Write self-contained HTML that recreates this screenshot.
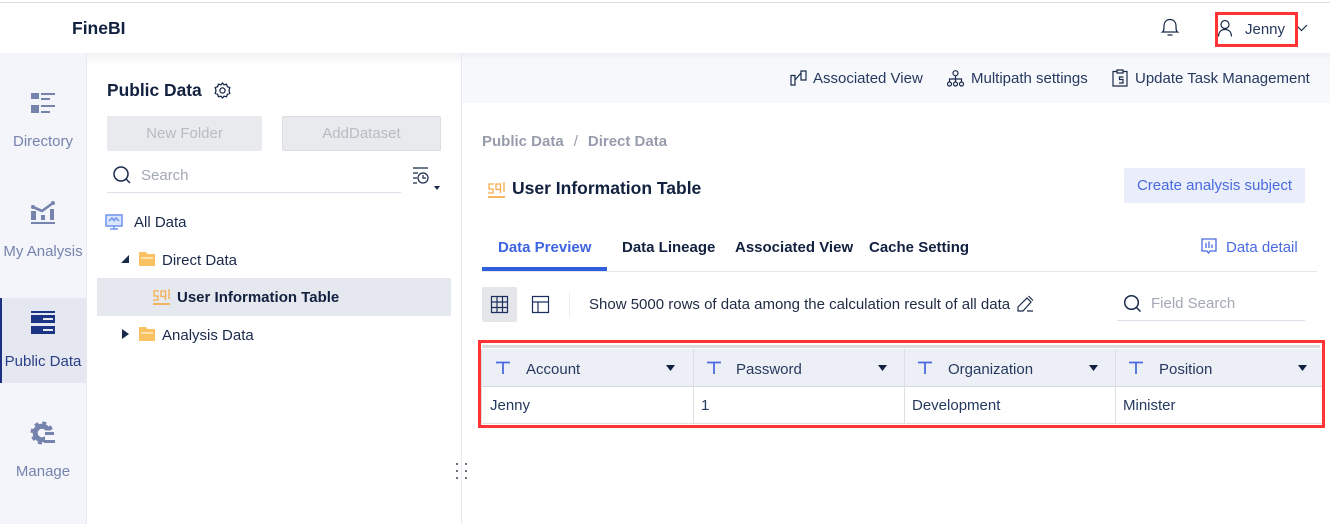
<!DOCTYPE html>
<html>
<head>
<meta charset="utf-8">
<style>
html,body{margin:0;padding:0;background:#fff}
#p{position:relative;width:1330px;height:524px;overflow:hidden;background:#fff;font-family:"Liberation Sans",sans-serif;color:#1a2a4a;font-size:15px}
#p div,#p svg{position:absolute}
.t{white-space:nowrap;line-height:18px}
.n{color:#7583ad;width:86px;text-align:center;left:0;font-size:15px}
.b{font-weight:bold;color:#12213f}
svg{fill:none;stroke:#1a2a4a;stroke-width:1.2;overflow:visible}
</style>
</head>
<body>
<div id="p">
<div style="left:0;top:2px;width:1330px;height:1px;background:#dcdde0"></div>
<div style="left:0;top:53px;width:1330px;height:50px;background:linear-gradient(#eceef3 0,#f6f8fc 6px)"></div>
<div style="left:87px;top:53px;width:375px;height:471px;background:linear-gradient(#f0f1f4 0,#fff 12px)"></div>
<div style="left:0;top:53px;width:86px;height:471px;background:#f4f5fa;border-right:1px solid #e8eaf0"></div>
<div style="left:461px;top:53px;width:1px;height:471px;background:#e8e9ee"></div>

<div class="t b" style="left:72px;top:19px;font-size:17.500px">FineBI</div>

<svg style="left:1161px;top:18px" width="18" height="18" viewBox="0 0 18 18"><path d="M1.500 14C3 13 3 11 3 8C3 4 5.500 1.500 9 1.500C12.500 1.500 15 4 15 8C15 11 15 13 16.500 14ZM6.500 17H11.500"/></svg>
<svg style="left:1218px;top:20px" width="14" height="17" viewBox="0 0 14 17"><circle cx="7" cy="4.500" r="4"/><path d="M.6 16.500C.6 12 3 9.500 7 9.500C11 9.500 13.400 12 13.400 16.500"/></svg>
<div class="t" style="left:1245px;top:21px;color:#26395f">Jenny</div>
<svg style="left:1295px;top:24px" width="13" height="8" viewBox="0 0 13 8"><path d="M1 1L6.500 6.500L12 1"/></svg>
<div style="left:1215px;top:12px;width:77px;height:29px;border:3px solid #f33;"></div>

<svg style="left:790px;top:70px" width="17" height="16" viewBox="0 0 17 16"><path d="M1 5.500H5V15H1ZM11 1H16V10H11ZM5 10L11 3"/></svg>
<div class="t" style="left:813px;top:70px;color:#26395f">Associated View</div>
<svg style="left:947px;top:70px" width="17" height="17" viewBox="0 0 17 17"><circle cx="8.500" cy="3.200" r="2.500"/><circle cx="2.500" cy="14" r="2"/><circle cx="8.500" cy="14" r="2"/><circle cx="14.500" cy="14" r="2"/><path d="M8.500 6V12M2.500 12V9H14.500V12"/></svg>
<div class="t" style="left:971px;top:70px;color:#26395f">Multipath settings</div>
<svg style="left:1112px;top:69px" width="17" height="18" viewBox="0 0 17 18"><path d="M5 2.500H1V17H15V2.500H11M5 1H11V4H5ZM11.500 8H7.500V10.500H11V14H7"/></svg>
<div class="t" style="left:1135px;top:70px;color:#26395f">Update Task Management</div>

<!-- nav -->
<svg style="left:31px;top:92px;stroke:none;fill:#7583ad" width="24" height="22" viewBox="0 0 24 22"><path d="M0 1H8V7H0ZM0 13H8V21H0ZM10 1H24V3H10ZM10 6H19V8H10ZM10 13H24V15H10ZM10 19H19V21H10Z"/></svg>
<div class="t n" style="top:133px">Directory</div>
<svg style="left:31px;top:201px;stroke:none;fill:#7583ad" width="24" height="24" viewBox="0 0 24 24"><path d="M0 10H5V19H0ZM10 14H14V19H10ZM19 8H23V19H19ZM0 21H24V23H0Z"/><path d="M2 6L11 10L22 2" style="stroke:#7583ad;stroke-width:2.600;fill:none"/><circle cx="2" cy="6" r="2"/><circle cx="22" cy="2" r="2"/></svg>
<div class="t n" style="top:243px">My Analysis</div>
<div style="left:0;top:298px;width:86px;height:85px;background:#e6e8f1"></div>
<div style="left:0;top:298px;width:2px;height:85px;background:#1c3280"></div>
<svg style="left:31px;top:311px;stroke:none;fill:#1c3484" width="24" height="24" viewBox="0 0 24 24"><path d="M0 0H24V2H0ZM0 4H24V12H0ZM0 15H24V23H0Z"/><path d="M12 7H22V9H12ZM12 18H22V20H12Z" fill="#e6e8f1"/></svg>
<div class="t n" style="top:353px;color:#2a3f85">Public Data</div>
<svg style="left:31px;top:421px;stroke:none;fill:#7583ad" width="24" height="24" viewBox="0 0 24 24"><circle cx="11" cy="12" r="6.800" style="stroke:#7583ad;stroke-width:5;fill:none"/><circle cx="11" cy="12" r="10" style="stroke:#7583ad;stroke-width:3;stroke-dasharray:4 3.850;fill:none"/><path d="M14 9.500H24V24H14Z" fill="#f4f5fa"/><path d="M14 11H23V14H14ZM13 19H24V22H13Z"/></svg>
<div class="t n" style="top:463px">Manage</div>

<!-- panel -->
<div class="t b" style="left:107px;top:81px;font-size:17.400px">Public Data</div>
<svg style="left:214px;top:82px;stroke-width:1.300" width="17" height="17" viewBox="0 0 17 17"><path d="M8.500 1L10 2.800L12.500 2.300L13.400 4.700L15.800 5.500L15 8.500L15.800 11.500L13.400 12.300L12.500 14.700L10 14.200L8.500 16L7 14.200L4.500 14.700L3.600 12.300L1.200 11.500L2 8.500L1.200 5.500L3.600 4.700L4.500 2.300L7 2.800Z"/><circle cx="8.500" cy="8.500" r="2.600"/></svg>
<div style="left:107px;top:116px;width:155px;height:35px;background:#e9eaed;border-radius:2px"></div>
<div class="t" style="left:107px;top:125px;width:155px;text-align:center;color:#b8bbc2">New Folder</div>
<div style="left:282px;top:116px;width:157px;height:33px;background:#e9eaed;border:1px solid #dcdee2;border-radius:2px"></div>
<div class="t" style="left:282px;top:125px;width:159px;text-align:center;color:#b8bbc2">AddDataset</div>
<svg style="left:113px;top:166px;stroke-width:1.500" width="18" height="18" viewBox="0 0 18 18"><circle cx="8" cy="8" r="7"/><path d="M13 13L17 17"/></svg>
<div class="t" style="left:141px;top:167px;color:#a3a8b5">Search</div>
<div style="left:107px;top:192px;width:294px;height:1px;background:#dfe1ea"></div>
<svg style="left:412px;top:167px" width="20" height="18" viewBox="0 0 20 18"><path d="M1 1H16M1 6H6M1 11H5M1 16H5"/><circle cx="11" cy="11" r="5"/><path d="M11 8V11H14"/></svg>
<svg style="left:434px;top:186px;stroke:none;fill:#1a2a4a" width="6" height="5" viewBox="0 0 6 5"><path d="M0 0H6L3 4Z"/></svg>

<svg style="left:105px;top:214px;stroke:#6f94ee;stroke-width:1.500" width="18" height="16" viewBox="0 0 18 16"><path d="M1 1H17V12H1Z" fill="#dbe5fb"/><path d="M4 7L7 4L9 6.500L11 4L14 7M5 15H13M9 12V15"/></svg>
<div class="t" style="left:134px;top:214px">All Data</div>
<svg style="left:121px;top:255px;stroke:none;fill:#1a2a4a" width="9" height="8" viewBox="0 0 9 8"><path d="M8 0V8H0Z"/></svg>
<svg style="left:139px;top:251px;stroke:none" width="16" height="16" viewBox="0 0 16 16"><path d="M0 1H7L8.500 3H16V15H0Z" fill="#fbc262"/><path d="M2 6H14V8H2Z" fill="#fde2ad"/></svg>
<div class="t" style="left:162px;top:252px">Direct Data</div>
<div style="left:97px;top:278px;width:354px;height:38px;background:#e6e8ef"></div>
<svg style="left:153px;top:289px;stroke:#f5ad4a;stroke-width:1.300" width="17" height="17" viewBox="0 0 17 17"><path d="M6 2H1V7H5V11H0M8 2H12.500V7.500H8V2ZM12.500 7.500V11M16 0V10"/><path d="M0 15H17" style="stroke-width:1.800"/></svg>
<div class="t" style="left:177px;top:289px;font-weight:bold;color:#12213f">User Information Table</div>
<svg style="left:122px;top:329px;stroke:none;fill:#1a2a4a" width="7" height="10" viewBox="0 0 7 10"><path d="M0 0L7 5L0 10Z"/></svg>
<svg style="left:139px;top:326px;stroke:none" width="16" height="16" viewBox="0 0 16 16"><path d="M0 1H7L8.500 3H16V15H0Z" fill="#fbc262"/><path d="M2 6H14V8H2Z" fill="#fde2ad"/></svg>
<div class="t" style="left:162px;top:327px">Analysis Data</div>
<svg style="left:456px;top:463px;stroke:none;fill:#6a6f80" width="11" height="18" viewBox="0 0 11 18"><rect x="0" y="0" width="2" height="2"/><rect x="9" y="0" width="2" height="2"/><rect x="0" y="7" width="2" height="2"/><rect x="9" y="7" width="2" height="2"/><rect x="0" y="14" width="2" height="2"/><rect x="9" y="14" width="2" height="2"/></svg>

<!-- main -->
<div class="t" style="left:482px;top:133px;font-weight:bold;color:#969cab">Public Data<span style="margin:0 10px;font-weight:normal">/</span>Direct Data</div>
<svg style="left:488px;top:182px;stroke:#f5ad4a;stroke-width:1.300" width="17" height="17" viewBox="0 0 17 17"><path d="M6 2H1V7H5V11H0M8 2H12.500V7.500H8V2ZM12.500 7.500V11M16 0V10"/><path d="M0 15H17" style="stroke-width:1.800"/></svg>
<div class="t b" style="left:512px;top:179px;font-size:17.500px">User Information Table</div>
<div style="left:1124px;top:168px;width:181px;height:35px;background:#e9eefa;border-radius:2px"></div>
<div class="t" style="left:1124px;top:177px;width:181px;text-align:center;color:#4a6ae0">Create analysis subject</div>

<div class="t" style="left:498px;top:239px;font-weight:bold;color:#3f64e0">Data Preview</div>
<div class="t b" style="left:622px;top:239px">Data Lineage</div>
<div class="t b" style="left:735px;top:239px">Associated View</div>
<div class="t b" style="left:869px;top:239px">Cache Setting</div>
<div style="left:482px;top:271px;width:835px;height:1px;background:#e6e7ec"></div>
<div style="left:482px;top:267px;width:125px;height:4px;background:#2f5fdc"></div>
<svg style="left:1201px;top:238px;stroke:#4a6ae0;stroke-width:1.300" width="16" height="17" viewBox="0 0 16 17"><path d="M1 1H15V13H9L7.500 15L6 13H1ZM5 5V10M8 3.500V10M11 6.500V10"/></svg>
<div class="t" style="left:1226px;top:239px;color:#4a6ae0">Data detail</div>

<div style="left:482px;top:287px;width:35px;height:35px;background:#e5e6ea;border-radius:2px"></div>
<svg style="left:491px;top:296px;stroke:#1c3060" width="17" height="17" viewBox="0 0 17 17"><path d="M.5.5H16.500V16.500H.5ZM6 .5V16.500M11.500 .5V16.500M.5 6H16.500M.5 11.500H16.500"/></svg>
<svg style="left:532px;top:296px;stroke:#1c3060" width="17" height="17" viewBox="0 0 17 17"><path d="M.5.5H16.500V16.500H.5ZM.5 6H16.500M6 6V16.500"/></svg>
<div style="left:569px;top:292px;width:1px;height:25px;background:#eceded"></div>
<div class="t" style="left:589px;top:296px;color:#1f2b44">Show 5000 rows of data among the calculation result of all data</div>
<svg style="left:1017px;top:295px" width="17" height="17" viewBox="0 0 17 17"><path d="M1 12L10 3L14 7L6 16H1ZM11.500 1L16 5.500M10 16H16"/></svg>
<svg style="left:1124px;top:295px;stroke-width:1.500" width="17" height="17" viewBox="0 0 17 17"><circle cx="7.500" cy="7.500" r="6.800"/><path d="M12.500 12.500L16.500 16.500"/></svg>
<div class="t" style="left:1151px;top:295px;color:#a3a8b5">Field Search</div>
<div style="left:1117px;top:320px;width:188px;height:1px;background:#dfe1ea"></div>

<!-- table -->
<div style="left:478px;top:340px;width:841px;height:82px;border:3px solid #f33"></div>
<div style="left:482px;top:345px;width:838px;height:3px;background:#dcdcdc"></div>
<div style="left:482px;top:349px;width:840px;height:37px;background:#eceff5"></div>
<div style="left:482px;top:386px;width:840px;height:1px;background:#d5d8e0"></div>
<div style="left:482px;top:423px;width:840px;height:1px;background:#e0e0e0"></div>
<div style="left:481px;top:349px;width:1px;height:74px;background:#dcdee4"></div>
<div style="left:693px;top:349px;width:1px;height:74px;background:#dcdfe6"></div>
<div style="left:904px;top:349px;width:1px;height:74px;background:#dcdfe6"></div>
<div style="left:1115px;top:349px;width:1px;height:74px;background:#dcdfe6"></div>

<svg style="left:496px;top:361px;stroke:#4a6ae0;stroke-width:1.800" width="14" height="13" viewBox="0 0 14 13"><path d="M0 1.500H14M7 1.500V13"/></svg>
<div class="t" style="left:526px;top:361px;color:#26395f">Account</div>
<svg style="left:666px;top:365px;stroke:none;fill:#12213f" width="9" height="6" viewBox="0 0 9 6"><path d="M0 0H9L4.500 6Z"/></svg>
<svg style="left:707px;top:361px;stroke:#4a6ae0;stroke-width:1.800" width="14" height="13" viewBox="0 0 14 13"><path d="M0 1.500H14M7 1.500V13"/></svg>
<div class="t" style="left:736px;top:361px;color:#26395f">Password</div>
<svg style="left:878px;top:365px;stroke:none;fill:#12213f" width="9" height="6" viewBox="0 0 9 6"><path d="M0 0H9L4.500 6Z"/></svg>
<svg style="left:918px;top:361px;stroke:#4a6ae0;stroke-width:1.800" width="14" height="13" viewBox="0 0 14 13"><path d="M0 1.500H14M7 1.500V13"/></svg>
<div class="t" style="left:948px;top:361px;color:#26395f">Organization</div>
<svg style="left:1089px;top:365px;stroke:none;fill:#12213f" width="9" height="6" viewBox="0 0 9 6"><path d="M0 0H9L4.500 6Z"/></svg>
<svg style="left:1129px;top:361px;stroke:#4a6ae0;stroke-width:1.800" width="14" height="13" viewBox="0 0 14 13"><path d="M0 1.500H14M7 1.500V13"/></svg>
<div class="t" style="left:1159px;top:361px;color:#26395f">Position</div>
<svg style="left:1298px;top:365px;stroke:none;fill:#12213f" width="9" height="6" viewBox="0 0 9 6"><path d="M0 0H9L4.500 6Z"/></svg>

<div class="t" style="left:490px;top:397px;color:#26395f">Jenny</div>
<div class="t" style="left:701px;top:397px;color:#26395f">1</div>
<div class="t" style="left:912px;top:397px;color:#26395f">Development</div>
<div class="t" style="left:1123px;top:397px;color:#26395f">Minister</div>
</div>
</body>
</html>
